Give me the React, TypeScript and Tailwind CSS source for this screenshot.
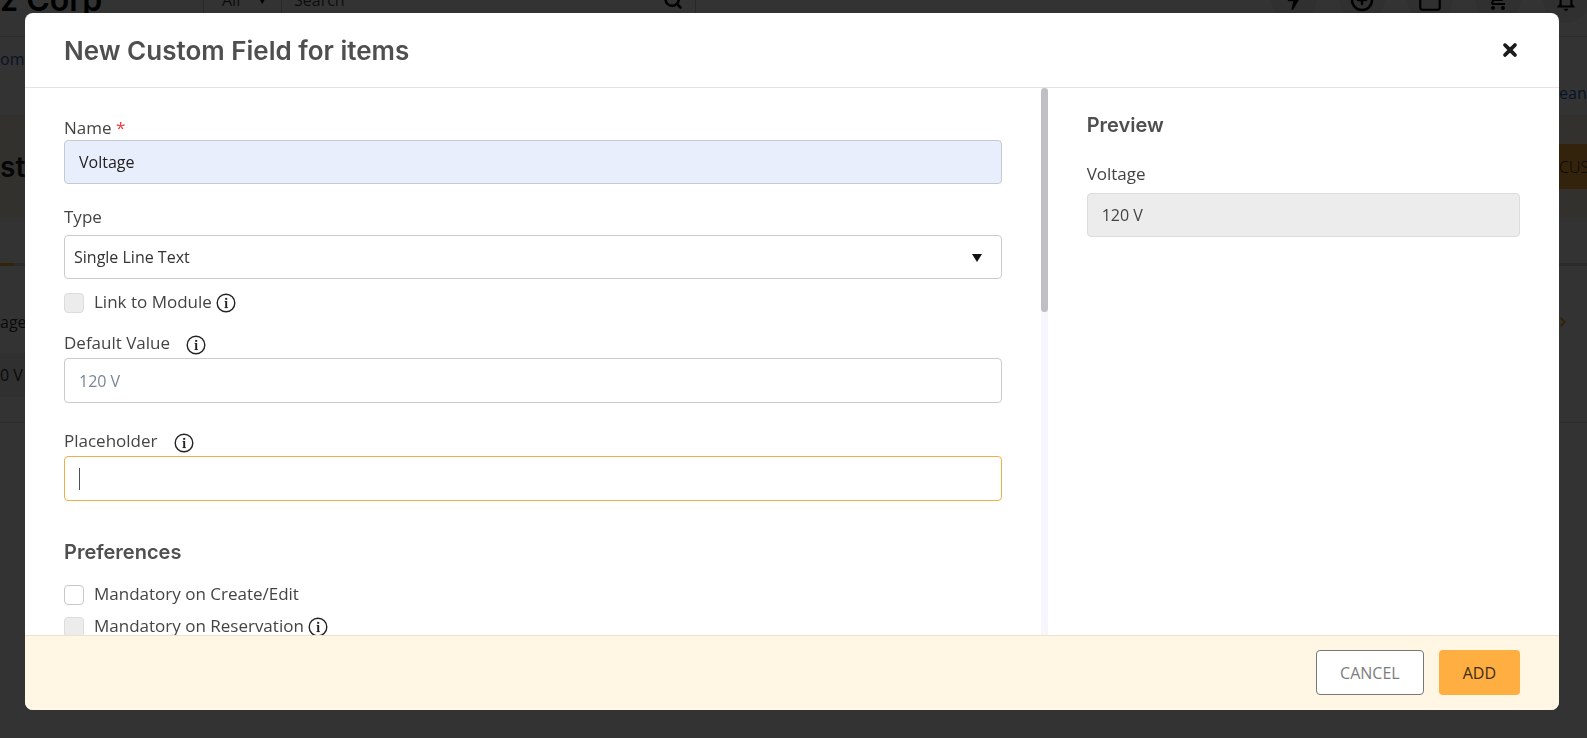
import { useState } from 'react';
import { ChevronRight, CirclePlus, Search, Square } from 'lucide-react';
import { FaBolt } from 'react-icons/fa';
import { FaXmark } from 'react-icons/fa6';
import { MdNotificationsNone, MdOutlineShoppingCart } from 'react-icons/md';

const fieldClass =
  'block w-full rounded border px-3.5 text-base font-normal outline-none placeholder:text-[#7b8695] focus:border-[#efae4a]';
const labelClass = 'text-[17px] leading-6 font-normal text-[#444]';
const headingClass = 'font-[Inter,sans-serif] font-semibold text-[#4f4f4f]';

function InfoIcon() {
  return (
    <svg width="20" height="20" viewBox="0 0 20 20" fill="none" className="shrink-0" aria-hidden="true">
      <circle cx="10" cy="10" r="8.8" stroke="#222" strokeWidth="1.4" />
      <path d="M8.6 8.4h1.5M8.5 14.6h3.4" stroke="#222" strokeWidth="0.9" />
      <path d="M10.2 8v7" stroke="#222" strokeWidth="1.9" />
      <rect x="9.2" y="4.9" width="2" height="1.9" fill="#222" />
    </svg>
  );
}

function CheckRow({ id, label, disabled, info }: { id: string; label: string; disabled?: boolean; info?: boolean }) {
  return (
    <div className="flex h-5 items-center">
      <input
        id={id}
        type="checkbox"
        disabled={disabled}
        className="h-5 w-5 shrink-0 appearance-none rounded border border-[#c8c8c8] bg-white checked:bg-[#ffae42] disabled:border-[#dcdcdc] disabled:bg-[#ececec]"
      />
      <label htmlFor={id} className={`${labelClass} pl-2.5 pb-0.5`}>{label}</label>
      {info && <span className="pl-1"><InfoIcon /></span>}
    </div>
  );
}

// Page that stays visible around the dialog
function PageBehind() {
  const icons = [
    <FaBolt key="bolt" size={20} />,
    <CirclePlus key="plus" size={24} strokeWidth={2.5} />,
    <Square key="square" size={26} />,
    <MdOutlineShoppingCart key="cart" size={24} />,
    <MdNotificationsNone key="bell" size={26} />,
  ];

  return (
    <div className="h-full overflow-hidden bg-white" aria-hidden="true">
      <header className="-mt-9 flex h-[73px] items-center justify-between border-b border-[#ddd]">
        <div className="flex items-center">
          <span className="w-[203px] font-[Inter,sans-serif] text-[32px] font-semibold text-black">z Corp</span>
          <div className="flex h-[50px] w-[493px] items-center border border-[#ccc] font-normal text-[#444]">
            <span className="flex h-full w-[78px] items-center gap-4 border-r border-[#ccc] pl-[18px]">
              All <span className="text-xs text-black">▼</span>
            </span>
            <span className="flex-1 pl-3">Search</span>
            <Search size={20} strokeWidth={3} className="mr-3 text-black" />
          </div>
        </div>
        <div className="-mr-0.5 flex gap-[22px] text-black">
          {icons.map((icon) => (
            <span key={icon.key} className="flex h-[46px] w-[46px] items-center justify-center rounded-full bg-[#eee]">
              {icon}
            </span>
          ))}
        </div>
      </header>
      <div className="flex h-[78px] justify-between font-normal text-[#2969c4]">
        <span className="pt-2.5">om F</span>
        <span className="w-7 pt-11">ean</span>
      </div>
      <div className="flex h-[103px] items-center justify-between bg-[#fef6e4]">
        <span className="font-[Inter,sans-serif] text-[28px] font-semibold text-[#222]">sto</span>
        <span className="flex h-[45px] w-7 items-center overflow-hidden bg-[#ffae42] text-[#222]">CUS</span>
      </div>
      <div className="mt-[45px] flex h-[3px] bg-[#d5d5d5]">
        <div className="w-3.5 bg-[#ffae42]" />
      </div>
      <div className="flex justify-between pt-11 pb-[19px]">
        <span className="leading-6 font-normal text-[#333]">age</span>
        <span className="flex w-[31px] items-center">
          <ChevronRight size={14} strokeWidth={4} className="text-[#ffae42]" />
        </span>
      </div>
      <div className="flex h-11 w-20 items-center bg-[#eee] font-normal text-[#333]">0 V</div>
      <div className="mt-[25px] border-b border-[#ddd]" />
    </div>
  );
}

export default function App() {
  const [name, setName] = useState('Voltage');
  const [defaultValue, setDefaultValue] = useState('');
  const [placeholder, setPlaceholder] = useState('');

  return (
    <div className="relative h-screen overflow-hidden font-['Open_Sans',sans-serif] text-base font-light">
      <PageBehind />

      <div className="fixed inset-0 flex bg-black/80 pt-[13px] pr-7 pb-7 pl-[25px]">
        <div role="dialog" aria-labelledby="dialog-title" className="flex min-w-0 flex-1 flex-col overflow-hidden rounded-lg bg-white">
          <div className="flex h-[75px] shrink-0 items-center justify-between border-b border-[#e4e4e4] px-[39px]">
            <h2 id="dialog-title" className={`${headingClass} text-[26px]`}>New Custom Field for items</h2>
            <button type="button" aria-label="Close" className="text-[#1c1c1c]">
              <FaXmark size={20} strokeWidth={30} stroke="currentColor" />
            </button>
          </div>

          <div className="flex min-h-0 flex-1">
            <div className="flex w-2/3 min-w-0">
              <form id="field-form" className="min-w-0 flex-1 overflow-hidden px-[39px] pt-7">
                <label htmlFor="name" className={`${labelClass} block`}>
                  Name <span className="text-[#f0353f]">*</span>
                </label>
                <input
                  id="name"
                  value={name}
                  onChange={(e) => setName(e.target.value)}
                  className={`${fieldClass} h-11 border-[#c5c9d2] bg-[#e8eefc] text-[#222]`}
                />

                <label htmlFor="type" className={`${labelClass} mt-[21px] mb-1.5 block`}>Type</label>
                <div className="relative">
                  <select id="type" className="block h-11 w-full appearance-none rounded border border-[#cbcbcb] bg-white px-[9px] font-normal text-[#333] outline-none">
                    <option>Single Line Text</option>
                  </select>
                  <svg width="12" height="8" viewBox="0 0 12 8" className="pointer-events-none absolute top-[19px] right-[19px]" aria-hidden="true">
                    <path d="M1 0h10L6 8z" fill="#111" />
                  </svg>
                </div>

                <div className="mt-3.5">
                  <CheckRow id="link" label="Link to Module" disabled info />
                </div>

                <div className="mt-[18px] mb-[3px] flex h-6 items-center gap-4">
                  <label htmlFor="default" className={labelClass}>Default Value</label>
                  <span className="pt-1"><InfoIcon /></span>
                </div>
                <input
                  id="default"
                  placeholder="120 V"
                  value={defaultValue}
                  onChange={(e) => setDefaultValue(e.target.value)}
                  className={`${fieldClass} h-[45px] border-[#cbcbcb] bg-white text-[#333]`}
                />

                <div className="mt-[26px] mb-[3px] flex h-6 items-center gap-4">
                  <label htmlFor="placeholder" className={labelClass}>Placeholder</label>
                  <span className="pt-1"><InfoIcon /></span>
                </div>
                <div className="relative">
                  <input
                    id="placeholder"
                    autoFocus
                    value={placeholder}
                    onChange={(e) => setPlaceholder(e.target.value)}
                    className={`${fieldClass} peer h-[45px] border-[#cbcbcb] bg-white text-[#333]`}
                  />
                  {!placeholder && (
                    <span className="pointer-events-none absolute top-3 left-[15px] hidden h-[22px] w-px bg-[#495057] peer-focus:block" />
                  )}
                </div>

                <h3 className={`${headingClass} mt-[37px] mb-[19px] text-xl leading-7`}>Preferences</h3>
                <div className="flex flex-col gap-3">
                  <CheckRow id="mandatory-edit" label="Mandatory on Create/Edit" />
                  <CheckRow id="mandatory-reservation" label="Mandatory on Reservation" disabled info />
                </div>
              </form>

              <div className="w-[7px] shrink-0 bg-[#f6f6fc]">
                <div className="h-[41%] rounded-full bg-[#bfbfc4]" />
              </div>
            </div>

            <aside className="w-1/3 min-w-0 px-[39px] pt-[23px]">
              <h3 className={`${headingClass} text-xl leading-7`}>Preview</h3>
              <label htmlFor="preview" className={`${labelClass} mt-[23px] mb-[7px] block`}>Voltage</label>
              <input
                id="preview"
                disabled
                readOnly
                value="120 V"
                className={`${fieldClass} h-11 border-[#dcdcdc] bg-[#ececec] text-[#444]`}
              />
            </aside>
          </div>

          <div className="flex h-[75px] shrink-0 items-start justify-end gap-[15px] border-t border-[#e9e3d6] bg-[#fff6e4] px-[39px] pt-3.5">
            <button type="button" className="h-[45px] rounded border border-[#777] bg-white px-[23px] font-normal text-[#7d7d7d]">CANCEL</button>
            <button type="submit" form="field-form" className="h-[45px] rounded bg-[#ffae42] px-6 font-normal text-[#3d2c12]">ADD</button>
          </div>
        </div>
      </div>
    </div>
  );
}
